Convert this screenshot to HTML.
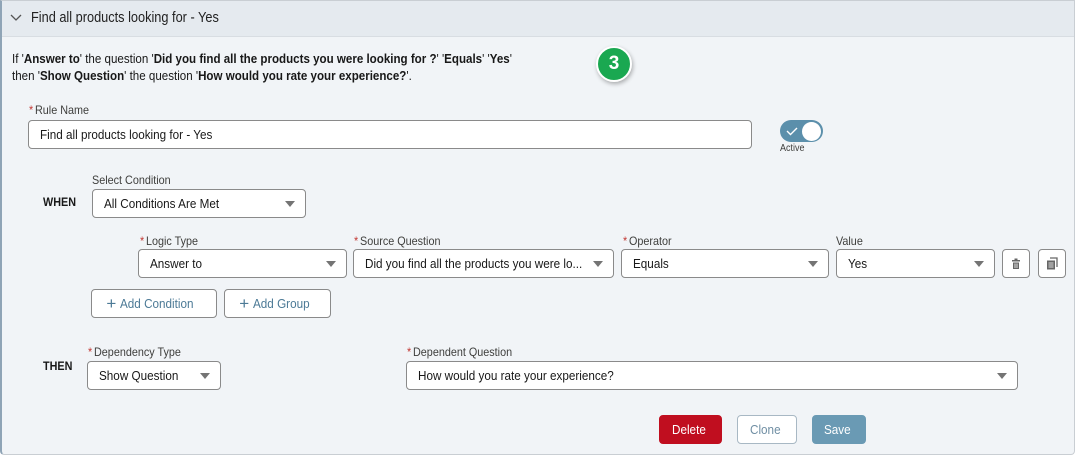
<!DOCTYPE html>
<html><head><meta charset="utf-8"><style>
*{box-sizing:border-box;margin:0;padding:0}
body{width:1075px;height:455px;overflow:hidden;background:#fff;font-family:"Liberation Sans",sans-serif;color:#181818;position:relative}
.a{position:absolute}
.n{display:inline-block;white-space:nowrap;transform:scaleX(.9);transform-origin:0 50%}
.lbl{position:absolute;font-size:12px;color:#3e3e3c}
.lbl .r{color:#c23934;margin-right:2px}
.box{position:absolute;height:29px;background:#fff;border:1px solid #8a8a8a;border-radius:4px;font-size:13px;line-height:27px;padding-left:11px;color:#181818}
.dd::after{content:"";position:absolute;right:10px;top:11px;border-left:5px solid transparent;border-right:5px solid transparent;border-top:6px solid #747474}
.btn{position:absolute;height:29px;border:1px solid #8a8a8a;border-radius:4px;background:#fff;font-size:13px;line-height:27px;text-align:center;color:#4c7a96}
b{font-weight:bold}
</style></head><body>
<div class="a" style="left:0;top:0;width:1075px;height:455px;background:#f1f4f7;border:1px solid #c9ced3;border-left:2px solid #8fa4b6;border-radius:0 0 4px 4px"></div>
<div class="a" style="left:2px;top:1px;width:1072px;height:36px;background:#e5eaef;border-bottom:1px solid #d8dde2"></div>
<svg class="a" style="left:10px;top:14px" width="12" height="8" viewBox="0 0 12 8"><path d="M1 1 L6 6 L11 1" fill="none" stroke="#555" stroke-width="1.3"/></svg>
<div class="a" style="left:31px;top:9px;font-size:15px;color:#222"><span class="n" style="transform:scaleX(.85)">Find all products looking for - Yes</span></div>

<div class="a" style="left:12px;top:50px;font-size:13px;line-height:17px;color:#181818"><span class="n" style="transform:scaleX(.89)">If '<b>Answer to</b>' the question '<b>Did you find all the products you were looking for ?</b>' '<b>Equals</b>' '<b>Yes</b>'</span><br><span class="n" style="transform:scaleX(.89)">then '<b>Show Question</b>' the question '<b>How would you rate your experience?</b>'.</span></div>
<div class="a" style="left:596px;top:46px;width:36px;height:36px;border-radius:50%;background:#1aa851;border:2px solid #fff;box-shadow:1px 2px 4px rgba(0,0,0,.3);color:#fff;font-weight:bold;font-size:19px;text-align:center;line-height:32px">3</div>

<div class="lbl" style="left:29px;top:103px"><span class="n"><span class="r">*</span>Rule Name</span></div>
<div class="box" style="left:28px;top:120px;width:724px"><span class="n">Find all products looking for - Yes</span></div>
<div class="a" style="left:780px;top:120px;width:43px;height:22px;border-radius:11px;background:#5b8fab"></div>
<div class="a" style="left:802px;top:122px;width:19px;height:19px;border-radius:50%;background:#fff"></div>
<svg class="a" style="left:786px;top:126px" width="12" height="10"><path d="M1 5 L4.5 8.5 L11 2" fill="none" stroke="#fff" stroke-width="1.4"/></svg>
<div class="a" style="left:780px;top:143px;font-size:10px;color:#3e3e3c"><span class="n">Active</span></div>

<div class="lbl" style="left:92px;top:173px"><span class="n">Select Condition</span></div>
<div class="a" style="left:43px;top:195px;font-size:12px;font-weight:bold"><span class="n">WHEN</span></div>
<div class="box dd" style="left:92px;top:189px;width:214px"><span class="n">All Conditions Are Met</span></div>

<div class="lbl" style="left:140px;top:234px"><span class="n"><span class="r">*</span>Logic Type</span></div>
<div class="box dd" style="left:138px;top:249px;width:209px"><span class="n">Answer to</span></div>
<div class="lbl" style="left:354px;top:234px"><span class="n"><span class="r">*</span>Source Question</span></div>
<div class="box dd" style="left:353px;top:249px;width:261px"><span class="n">Did you find all the products you were lo...</span></div>
<div class="lbl" style="left:623px;top:234px"><span class="n"><span class="r">*</span>Operator</span></div>
<div class="box dd" style="left:621px;top:249px;width:208px"><span class="n">Equals</span></div>
<div class="lbl" style="left:836px;top:234px"><span class="n">Value</span></div>
<div class="box dd" style="left:836px;top:249px;width:159px"><span class="n">Yes</span></div>
<div class="btn" style="left:1002px;top:249px;width:28px"></div>
<svg class="a" style="left:1010px;top:258px" width="12" height="12" viewBox="0 0 12 12"><rect x="2" y="2" width="8" height="1.5" fill="#666"/><rect x="4.5" y="0.5" width="3" height="1.5" fill="#666"/><path d="M3 4.5h6v6.5H3z" fill="#666"/><path d="M5 5.5v4.5M7 5.5v4.5" stroke="#fff" stroke-width=".8"/></svg>
<div class="btn" style="left:1038px;top:249px;width:28px"></div>
<svg class="a" style="left:1046px;top:257px" width="12" height="13" viewBox="0 0 12 13"><path d="M4 1h7v9" fill="none" stroke="#666" stroke-width="1.3"/><rect x="1" y="3.5" width="8" height="9" fill="#666"/><path d="M2.5 6h5M2.5 8h5M2.5 10h5" stroke="#fff" stroke-width=".8"/></svg>

<div class="btn" style="left:91px;top:289px;width:126px"><span style="font-size:17px;vertical-align:-1px">+</span> <span class="n">Add Condition</span></div>
<div class="btn" style="left:224px;top:289px;width:107px"><span style="font-size:17px;vertical-align:-1px">+</span> <span class="n">Add Group</span></div>

<div class="lbl" style="left:88px;top:345px"><span class="n"><span class="r">*</span>Dependency Type</span></div>
<div class="a" style="left:43px;top:359px;font-size:12px;font-weight:bold"><span class="n">THEN</span></div>
<div class="box dd" style="left:87px;top:361px;width:134px"><span class="n">Show Question</span></div>
<div class="lbl" style="left:407px;top:345px"><span class="n"><span class="r">*</span>Dependent Question</span></div>
<div class="box dd" style="left:406px;top:361px;width:612px"><span class="n">How would you rate your experience?</span></div>

<div class="btn" style="left:659px;top:415px;width:63px;background:#c00e1f;border-color:#c00e1f;color:#fff"><span class="n">Delete</span></div>
<div class="btn" style="left:737px;top:415px;width:60px;border-color:#a8b8c4;color:#6f8ea3"><span class="n">Clone</span></div>
<div class="btn" style="left:812px;top:415px;width:54px;background:#6a9ab4;border-color:#6a9ab4;color:#fff"><span class="n">Save</span></div>
</body></html>
